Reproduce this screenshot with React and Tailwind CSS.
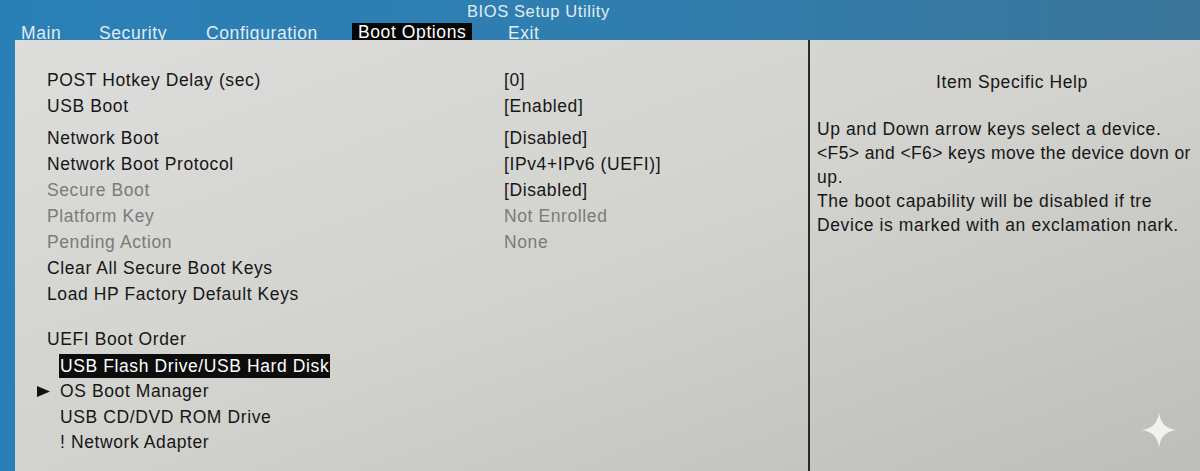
import React from "react";

const font = { fontFamily: '"Liberation Sans", Arial, sans-serif' };

function Row({ label, value, dim, valueDark }) {
  const dimC = "text-[#7b7b79]";
  const dark = "text-[#161616]";
  return (
    <div className="flex items-center h-[26px]">
      <div className={`w-[457px] ${dim ? dimC : dark}`}>{label}</div>
      {value && <div className={dim && !valueDark ? dimC : dark}>{value}</div>}
    </div>
  );
}

function BootItem({ text, selected, arrow }) {
  return (
    <div className="flex items-center h-[25.5px]">
      <div className="w-[22px] flex items-center">
        {arrow && (
          <svg width="13" height="11" viewBox="0 0 13 11">
            <polygon points="0,0 13,5.5 0,11" fill="#111" />
          </svg>
        )}
      </div>
      <div
        className={
          selected
            ? "bg-[#0d0d0d] text-white h-[24px] flex items-center px-[1px]"
            : "text-[#161616] px-[1px]"
        }
      >
        {text}
      </div>
    </div>
  );
}

export default function App() {
  return (
    <div
      className="relative w-[1200px] h-[471px] overflow-hidden flex flex-col bg-gradient-to-r from-[#2a80b6] via-[#2f7eb0] to-[#3a7498] text-[17.5px] tracking-[0.6px]"
      style={font}
    >
      {/* Header */}
      <div className="h-[40px] flex flex-col text-[#e3ecf2]">
        <div className="h-[23px] flex items-center pl-[467px] text-[16.5px]">BIOS Setup Utility</div>
        <div className="h-[17px] flex items-end leading-none">
          <div className="pl-[21px] w-[99px] translate-y-[2px]">Main</div>
          <div className="w-[107px] translate-y-[2px]">Security</div>
          <div className="w-[146px] translate-y-[2px]">Configuration</div>
          <div className="w-[156px] flex">
            <div className="bg-[#050505] text-white h-[17px] pl-[6px] pr-[6px] flex items-end">
              <span className="translate-y-[1px]">Boot Options</span>
            </div>
          </div>
          <div className="translate-y-[2px]">Exit</div>
        </div>
      </div>

      {/* Body */}
      <div className="relative flex-1 ml-[15px] flex bg-gradient-to-br from-[#dddddb] via-[#d2d2cf] to-[#bdbdb9]">
        {/* Left panel */}
        <div className="w-[795px] border-r-2 border-[#2a2a2a] pt-[27px] pl-[32px]">
          <Row label="POST Hotkey Delay (sec)" value="[0]" />
          <Row label="USB Boot" value="[Enabled]" />
          <div className="h-[6px]" />
          <Row label="Network Boot" value="[Disabled]" />
          <Row label="Network Boot Protocol" value="[IPv4+IPv6 (UEFI)]" />
          <Row label="Secure Boot" value="[Disabled]" dim valueDark />
          <Row label="Platform Key" value="Not Enrolled" dim />
          <Row label="Pending Action" value="None" dim />
          <Row label="Clear All Secure Boot Keys" />
          <Row label="Load HP Factory Default Keys" />
          <div className="h-[19px]" />
          <Row label="UEFI Boot Order" />
          <div className="-ml-[10px] pt-[1px]">
            <BootItem text="USB Flash Drive/USB Hard Disk" selected />
            <BootItem text="OS Boot Manager" arrow />
            <BootItem text="USB CD/DVD ROM Drive" />
            <BootItem text="! Network Adapter" />
          </div>
        </div>

        {/* Right panel */}
        <div className="flex-1 pt-[30px] text-[#161616]">
          <div className="h-[24px] flex items-center justify-center pl-[14px]">Item Specific Help</div>
          <div className="pl-[7px] pt-[23px] leading-[24px] whitespace-nowrap">
            <div>Up and Down arrow keys select a device.</div>
            <div className="tracking-[0.4px]">&lt;F5&gt; and &lt;F6&gt; keys move the device dovn or</div>
            <div>up.</div>
            <div>The boot capability will be disabled if tre</div>
            <div>Device is marked with an exclamation nark.</div>
          </div>
        </div>
      </div>

      {/* Watermark sparkle */}
      <svg
        className="absolute left-[1141px] top-[412px]"
        width="36"
        height="36"
        viewBox="0 0 36 36"
      >
        <path d="M18 0 C19 11 25 17 36 18 C25 19 19 25 18 36 C17 25 11 19 0 18 C11 17 17 11 18 0 Z" fill="#f1f1ef" />
      </svg>
    </div>
  );
}
